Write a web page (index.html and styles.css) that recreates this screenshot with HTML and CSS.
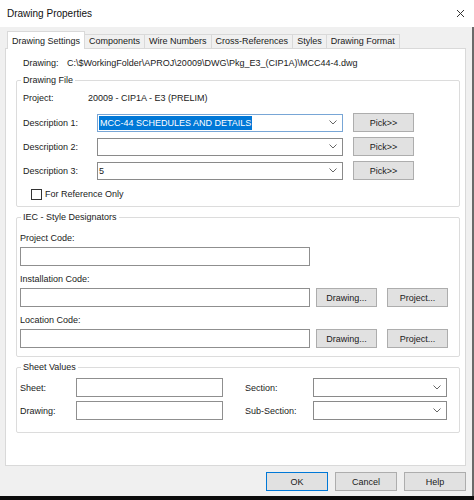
FILE: index.html
```html
<!DOCTYPE html>
<html lang="en">
<head>
    <meta charset="UTF-8">
    <title>Drawing Properties</title>
    <link rel="stylesheet" href="styles.css">
</head>
<body>

    <div class="window">
        <!-- Title bar -->
        <div class="titlebar">
            <span class="title">Drawing Properties</span>
            <svg class="close" width="9" height="9" viewBox="0 0 9 9">
                <path d="M1 1 L8 8 M8 1 L1 8" stroke="#333" stroke-width="1" fill="none"/>
            </svg>
        </div>

        <div class="dialog">
            <!-- Tabs -->
            <div class="tabs">
                <div class="tab active">Drawing Settings</div>
                <div class="tab">Components</div>
                <div class="tab">Wire Numbers</div>
                <div class="tab">Cross-References</div>
                <div class="tab">Styles</div>
                <div class="tab">Drawing Format</div>
            </div>

            <div class="panel">
                <div class="drawing-path">
                    <span class="path-label">Drawing:</span>
                    <span>C:\$WorkingFolder\APROJ\20009\DWG\Pkg_E3_(CIP1A)\MCC44-4.dwg</span>
                </div>

                <!-- Drawing File -->
                <fieldset class="group file-group">
                    <legend>Drawing File</legend>
                    <div class="project-row">
                        <span class="project-label">Project:</span>
                        <span>20009 - CIP1A - E3 (PRELIM)</span>
                    </div>
                    <div class="desc-row first">
                        <span class="desc-label">Description 1:</span>
                        <div class="combo focused">
                            <span class="combo-text"><span class="selected">MCC-44 SCHEDULES AND DETAILS</span></span>
                            <svg class="chevron" width="8" height="5" viewBox="0 0 8 5"><polyline points="0.5,0.5 4,4 7.5,0.5" fill="none" stroke="#666" stroke-width="1"/></svg>
                        </div>
                        <button class="btn pick">Pick&gt;&gt;</button>
                    </div>
                    <div class="desc-row">
                        <span class="desc-label">Description 2:</span>
                        <div class="combo">
                            <span class="combo-text"></span>
                            <svg class="chevron" width="8" height="5" viewBox="0 0 8 5"><polyline points="0.5,0.5 4,4 7.5,0.5" fill="none" stroke="#666" stroke-width="1"/></svg>
                        </div>
                        <button class="btn pick">Pick&gt;&gt;</button>
                    </div>
                    <div class="desc-row">
                        <span class="desc-label">Description 3:</span>
                        <div class="combo">
                            <span class="combo-text">5</span>
                            <svg class="chevron" width="8" height="5" viewBox="0 0 8 5"><polyline points="0.5,0.5 4,4 7.5,0.5" fill="none" stroke="#666" stroke-width="1"/></svg>
                        </div>
                        <button class="btn pick">Pick&gt;&gt;</button>
                    </div>
                    <div class="check-row">
                        <span class="checkbox"></span>
                        <span>For Reference Only</span>
                    </div>
                </fieldset>

                <!-- IEC -->
                <fieldset class="group iec-group">
                    <legend>IEC - Style Designators</legend>
                    <div class="field-label">Project Code:</div>
                    <div class="code-row">
                        <div class="textbox"></div>
                    </div>
                    <div class="field-label">Installation Code:</div>
                    <div class="code-row">
                        <div class="textbox"></div>
                        <button class="btn small">Drawing...</button>
                        <button class="btn small gap">Project...</button>
                    </div>
                    <div class="field-label">Location Code:</div>
                    <div class="code-row">
                        <div class="textbox"></div>
                        <button class="btn small">Drawing...</button>
                        <button class="btn small gap">Project...</button>
                    </div>
                </fieldset>

                <!-- Sheet Values -->
                <fieldset class="group sheet-group">
                    <legend>Sheet Values</legend>
                    <div class="sheet-grid">
                        <span>Sheet:</span>
                        <div class="textbox"></div>
                        <span class="right-label">Section:</span>
                        <div class="combo">
                            <span class="combo-text"></span>
                            <svg class="chevron" width="8" height="5" viewBox="0 0 8 5"><polyline points="0.5,0.5 4,4 7.5,0.5" fill="none" stroke="#666" stroke-width="1"/></svg>
                        </div>
                        <span>Drawing:</span>
                        <div class="textbox"></div>
                        <span class="right-label">Sub-Section:</span>
                        <div class="combo">
                            <span class="combo-text"></span>
                            <svg class="chevron" width="8" height="5" viewBox="0 0 8 5"><polyline points="0.5,0.5 4,4 7.5,0.5" fill="none" stroke="#666" stroke-width="1"/></svg>
                        </div>
                    </div>
                </fieldset>
            </div>

            <!-- Boutons -->
            <div class="footer">
                <button class="btn action default">OK</button>
                <button class="btn action">Cancel</button>
                <button class="btn action">Help</button>
            </div>
        </div>
    </div>

</body>
</html>
```

FILE: styles.css
```css
/* Base */
* { margin: 0; padding: 0; box-sizing: border-box; }
html, body { background: #0c0c0c; }
body { width: 474px; height: 500px; overflow: hidden; font-family: "Liberation Sans", Arial, sans-serif; font-size: 9px; color: #1a1a1a; }

/* Window */
.window { width: 474px; }
.titlebar { height: 27px; background: #fff; display: flex; align-items: center; justify-content: space-between; padding: 0 9px 0 7px; }
.title { font-size: 10px; color: #111; }
.dialog { height: 469px; background: #f0f0f0; border-right: 2px solid #6a6a6a; padding-top: 4px; }

/* Tabs */
.tabs { display: flex; align-items: flex-end; height: 17px; margin-left: 7px; }
.tab { height: 14px; line-height: 13px; padding: 0 4px; border: 1px solid #d9d9d9; border-bottom: none; border-left: none; background: #f0f0f0; white-space: nowrap; }
.tab.active { height: 18px; line-height: 18px; margin-bottom: -1px; background: #fff; border-left: 1px solid #d9d9d9; position: relative; z-index: 1; }

/* Panel */
.panel { height: 418px; margin: 0 6px 0 5px; background: #fff; border: 1px solid #d9d9d9; padding: 8px 5px 0 10px; }
.drawing-path { display: flex; line-height: 12px; padding-left: 7px; white-space: nowrap; }
.path-label { width: 44px; }

/* Group boxes */
.group { border: 1px solid #dcdcdc; border-radius: 2px; padding: 0 3px; min-width: 0; }
.group legend { line-height: 12px; padding: 0 2px; margin-left: 1px; }
.file-group { margin-top: 5px; padding: 6px 3px 6px 6px; }
.file-group legend { margin-left: -2px; }
.iec-group { margin-top: 4px; padding-top: 9px; padding-bottom: 8px; }
.sheet-group { margin-top: 4px; padding-top: 5px; padding-bottom: 12px; }

.project-row { display: flex; line-height: 12px; }
.project-label { width: 65px; }

.desc-row { display: flex; align-items: center; margin-top: 5px; }
.desc-row.first { margin-top: 9px; }
.desc-label { width: 74px; }

.combo { width: 246px; height: 18px; border: 1px solid #8a8a8a; background: #fff; display: flex; align-items: center; }
.combo.focused { border-color: #78a6d6; }
.combo-text { flex: 1; padding-left: 1px; line-height: 14px; white-space: nowrap; }
.selected { background: #0078d7; color: #fff; padding: 0 1px; display: inline-block; line-height: 14px; }
.chevron { margin-right: 5px; }

.check-row { display: flex; align-items: center; margin: 8px 0 0 8px; line-height: 12px; }
.checkbox { width: 11px; height: 11px; border: 1px solid #333; background: #fff; margin-right: 3px; }

/* Buttons */
.btn { font-family: inherit; font-size: 9px; color: #1a1a1a; background: #e1e1e1; border: 1px solid #adadad; height: 19px; width: 61px; }
.pick { margin-left: 10px; }
.small { margin-left: 6px; }
.small.gap { margin-left: 10px; }

/* IEC */
.field-label { line-height: 12px; }
.code-row { display: flex; align-items: center; margin: 3px 0 7px; }
.code-row:last-child { margin-bottom: 0; }
.textbox { width: 290px; height: 19px; border: 1px solid #8f8f8f; background: #fff; }

/* Sheet values */
.sheet-grid { display: grid; grid-template-columns: 56px 147px 90px 134px; row-gap: 4px; align-items: center; }
.sheet-grid .textbox { width: 147px; }
.sheet-grid .combo { width: 134px; height: 19px; }
.right-label { padding-left: 22px; }

/* Footer */
.footer { display: flex; justify-content: flex-end; gap: 7px; margin: 6px 6px 0 0; }
.action { width: 62px; }
.action.default { border-color: #0078d7; }
```
